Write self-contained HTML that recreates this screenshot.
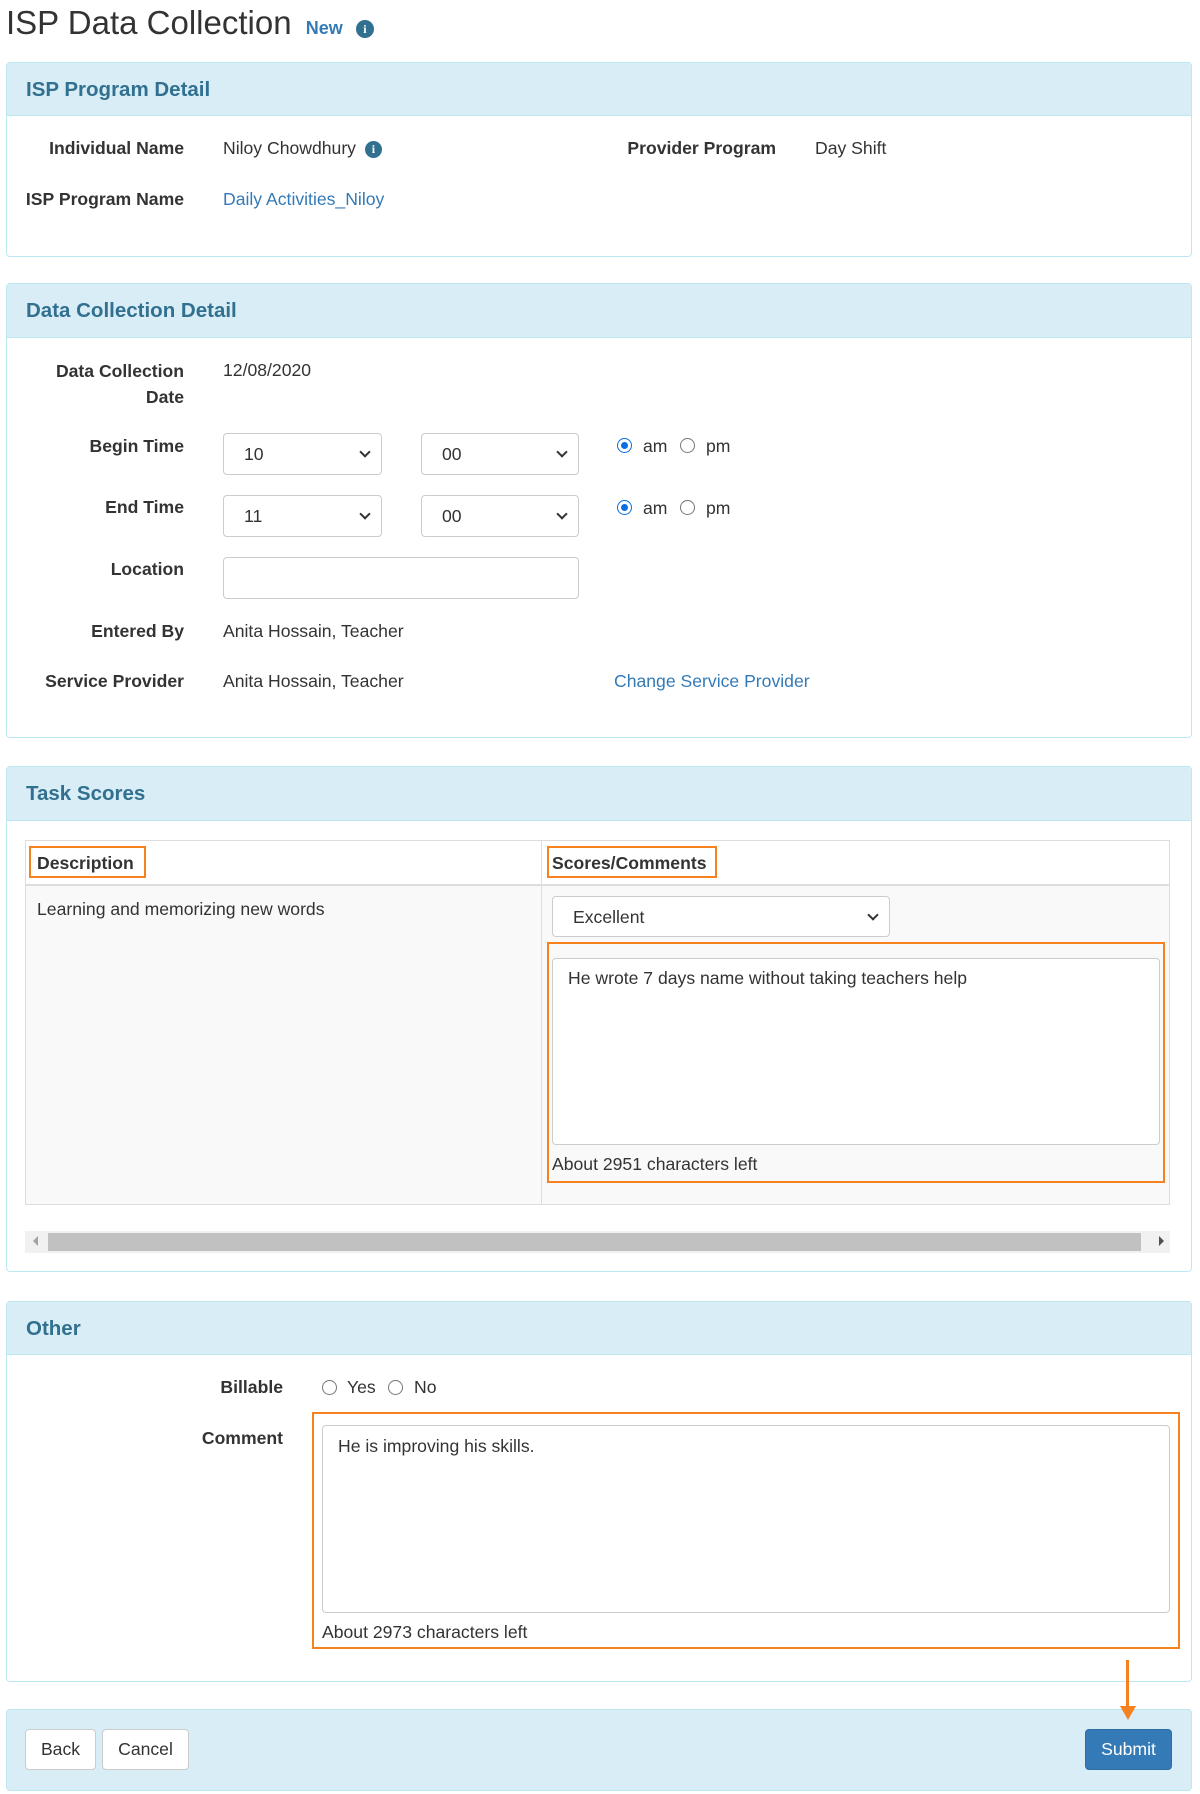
<!DOCTYPE html>
<html><head><meta charset="utf-8"><style>
*{box-sizing:border-box}
body{margin:0;width:1200px;height:1794px;position:relative;background:#fff;font-family:"Liberation Sans",Arial,sans-serif;font-size:17.6px;color:#333;overflow:hidden}
.a{position:absolute;white-space:nowrap}
.panel{position:absolute;left:6px;width:1186px;border:1px solid #bce8f1;border-radius:4px;background:#fff}
.ph{position:absolute;left:0;right:0;top:0;background:#d9edf7;border-bottom:1px solid #bce8f1;color:#31708f;font-weight:bold;font-size:20.5px;padding-left:19px}
.lbl{font-weight:bold;text-align:right}
.sel{position:absolute;border:1px solid #ccc;border-radius:4px;background:#fff;padding-left:20px;line-height:40px}
.sel:after{content:"";position:absolute;right:12px;top:14px;width:6px;height:6px;border-right:2px solid #333;border-bottom:2px solid #333;transform:rotate(45deg)}
.rad{position:absolute;width:15px;height:15px;border:1px solid #777;border-radius:50%;background:#fff}
.rad.on{border:1px solid #0a6ee0}
.rad.on:after{content:"";position:absolute;left:3px;top:3px;width:7px;height:7px;border-radius:50%;background:#0a6ee0}
.box{position:absolute;border:1px solid #ccc;border-radius:4px;background:#fff}
.or{position:absolute;border:2px solid #f5821f}
.link{color:#337ab7}
.btn{position:absolute;border:1px solid #ccc;border-radius:4px;background:#fff;text-align:center;line-height:38px}
.info{display:inline-block;width:17px;height:17px;border-radius:50%;background:#31708f;color:#fff;font-size:12px;font-weight:bold;text-align:center;line-height:17px;font-family:"Liberation Serif",serif;vertical-align:1px;margin-left:4px}
</style></head><body>
<div class="a" style="left:6px;top:4px;font-size:33px;color:#333">ISP Data Collection <span style="font-size:18px;color:#337ab7;font-weight:bold">&nbsp;New</span> <span class="info" style="width:18px;height:18px;line-height:18px">i</span></div>

<div class="panel" style="top:62px;height:195px"><div class="ph" style="height:53px;line-height:53px">ISP Program Detail</div></div>
<div class="a lbl" style="right:1016px;top:138px">Individual Name</div>
<div class="a" style="left:223px;top:138px">Niloy Chowdhury <span class="info">i</span></div>
<div class="a lbl" style="right:424px;top:138px">Provider Program</div>
<div class="a" style="left:815px;top:138px">Day Shift</div>
<div class="a lbl" style="right:1016px;top:189px">ISP Program Name</div>
<div class="a link" style="left:223px;top:189px">Daily Activities_Niloy</div>

<div class="panel" style="top:283px;height:455px"><div class="ph" style="height:54px;line-height:54px">Data Collection Detail</div></div>
<div class="a lbl" style="right:1016px;top:358px;line-height:26px">Data Collection<br>Date</div>
<div class="a" style="left:223px;top:360px">12/08/2020</div>
<div class="a lbl" style="right:1016px;top:436px">Begin Time</div>
<div class="sel" style="left:223px;top:433px;width:159px;height:42px">10</div>
<div class="sel" style="left:421px;top:433px;width:158px;height:42px">00</div>
<div class="rad on" style="left:617px;top:438px"></div><div class="a" style="left:643px;top:436px">am</div>
<div class="rad" style="left:680px;top:438px"></div><div class="a" style="left:706px;top:436px">pm</div>
<div class="a lbl" style="right:1016px;top:497px">End Time</div>
<div class="sel" style="left:223px;top:495px;width:159px;height:42px">11</div>
<div class="sel" style="left:421px;top:495px;width:158px;height:42px">00</div>
<div class="rad on" style="left:617px;top:500px"></div><div class="a" style="left:643px;top:498px">am</div>
<div class="rad" style="left:680px;top:500px"></div><div class="a" style="left:706px;top:498px">pm</div>
<div class="a lbl" style="right:1016px;top:559px">Location</div>
<div class="box" style="left:223px;top:557px;width:356px;height:42px"></div>
<div class="a lbl" style="right:1016px;top:621px">Entered By</div>
<div class="a" style="left:223px;top:621px">Anita Hossain, Teacher</div>
<div class="a lbl" style="right:1016px;top:671px">Service Provider</div>
<div class="a" style="left:223px;top:671px">Anita Hossain, Teacher</div>
<div class="a link" style="left:614px;top:671px">Change Service Provider</div>

<div class="panel" style="top:766px;height:506px"><div class="ph" style="height:54px;line-height:54px">Task Scores</div></div>
<div class="a" style="left:25px;top:840px;width:1145px;height:365px;border:1px solid #ddd"></div>
<div class="a" style="left:25px;top:884px;width:1145px;height:321px;background:#f9f9f9;border:1px solid #ddd;border-top:2px solid #ddd"></div>
<div class="a" style="left:541px;top:840px;width:1px;height:365px;background:#ddd"></div>
<div class="or" style="left:29px;top:846px;width:117px;height:32px"></div>
<div class="or" style="left:547px;top:846px;width:170px;height:32px"></div>
<div class="a" style="left:37px;top:853px;font-weight:bold">Description</div>
<div class="a" style="left:552px;top:853px;font-weight:bold">Scores/Comments</div>
<div class="a" style="left:37px;top:899px">Learning and memorizing new words</div>
<div class="sel" style="left:552px;top:896px;width:338px;height:41px">Excellent</div>
<div class="or" style="left:547px;top:942px;width:618px;height:241px"></div>
<div class="box" style="left:552px;top:958px;width:608px;height:187px"></div>
<div class="a" style="left:568px;top:968px">He wrote 7 days name without taking teachers help</div>
<div class="a" style="left:552px;top:1154px">About 2951 characters left</div>
<div class="a" style="left:25px;top:1231px;width:1145px;height:22px;background:#f1f1f1"></div>
<div class="a" style="left:48px;top:1233px;width:1093px;height:18px;background:#c1c1c1"></div>
<div class="a" style="left:33px;top:1236px;border:5px solid transparent;border-right:5px solid #a3a3a3;border-left:0"></div>
<div class="a" style="left:1159px;top:1236px;border:5px solid transparent;border-left:5px solid #505050;border-right:0"></div>

<div class="panel" style="top:1301px;height:381px"><div class="ph" style="height:53px;line-height:53px">Other</div></div>
<div class="a lbl" style="right:917px;top:1377px">Billable</div>
<div class="rad" style="left:322px;top:1380px"></div><div class="a" style="left:347px;top:1377px">Yes</div>
<div class="rad" style="left:388px;top:1380px"></div><div class="a" style="left:414px;top:1377px">No</div>
<div class="a lbl" style="right:917px;top:1428px">Comment</div>
<div class="or" style="left:312px;top:1412px;width:868px;height:237px"></div>
<div class="box" style="left:322px;top:1425px;width:848px;height:188px"></div>
<div class="a" style="left:338px;top:1436px">He is improving his skills.</div>
<div class="a" style="left:322px;top:1622px">About 2973 characters left</div>

<div class="a" style="left:6px;top:1709px;width:1186px;height:82px;background:#d9edf7;border:1px solid #bce8f1;border-radius:4px"></div>
<div class="btn" style="left:25px;top:1729px;width:71px;height:41px">Back</div>
<div class="btn" style="left:102px;top:1729px;width:87px;height:41px">Cancel</div>
<div class="btn" style="left:1085px;top:1729px;width:87px;height:41px;background:#337ab7;border-color:#2e6da4;color:#fff">Submit</div>
<div class="a" style="left:1126px;top:1660px;width:3px;height:50px;background:#f5821f"></div>
<div class="a" style="left:1120px;top:1706px;border-left:8px solid transparent;border-right:8px solid transparent;border-top:14px solid #f5821f"></div>
</body></html>
